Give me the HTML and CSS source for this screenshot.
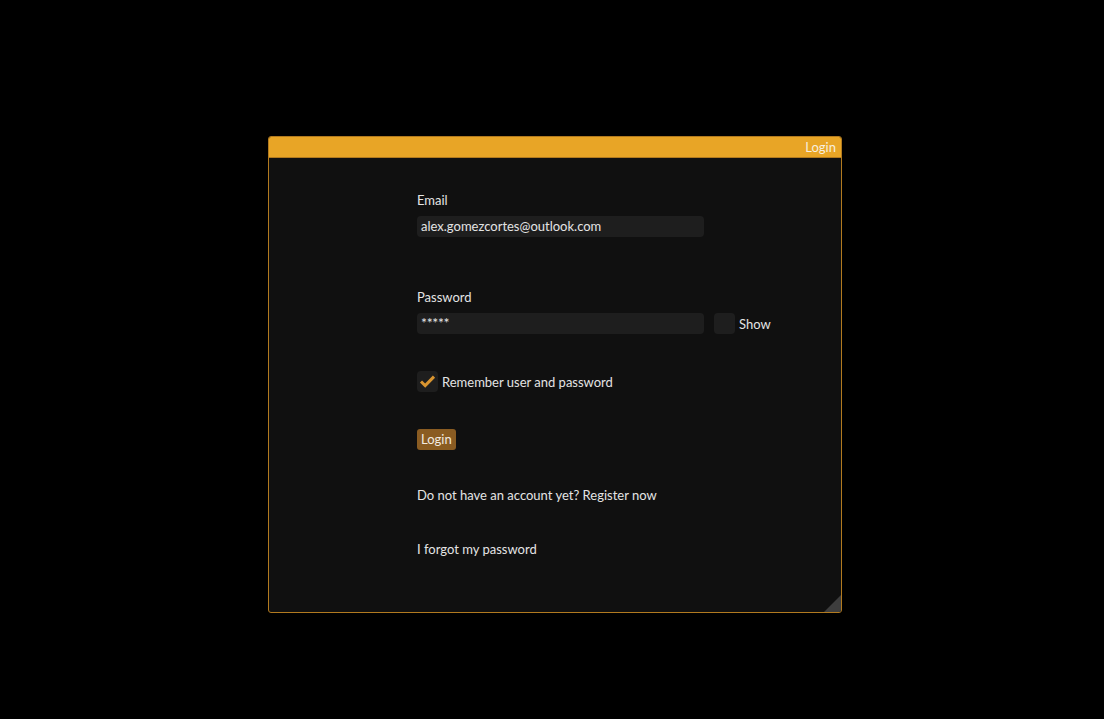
FILE: index.html
```html
<!DOCTYPE html>
<html>
<head>
<meta charset="utf-8">
<link rel="stylesheet" href="styles.css">
</head>
<body>
<div class="window">
  <div class="titlebar"><span class="title">Login</span></div>
  <div class="content">
    <div class="label">Email</div>
    <div class="input-row">
      <div class="input">alex.gomezcortes@outlook.com</div>
    </div>
    <div class="label label-pw">Password</div>
    <div class="input-row">
      <div class="input input-pw">*****</div>
      <div class="checkbox"></div>
      <span class="check-label">Show</span>
    </div>
    <div class="input-row remember">
      <div class="checkbox">
        <svg width="21" height="21" viewBox="0 0 21 21"><path d="M4 10.5 L8.2 14.6 L17 5.6" fill="none" stroke="#d99530" stroke-width="3"/></svg>
      </div>
      <span class="check-label">Remember user and password</span>
    </div>
    <div class="button-row"><button class="btn">Login</button></div>
    <div class="text link1">Do not have an account yet? Register now</div>
    <div class="text link2">I forgot my password</div>
  </div>
  <div class="grip"></div>
</div>
</body>
</html>
```
FILE: styles.css
```css
html, body {
  margin: 0;
  padding: 0;
  background: #000;
  height: 100%;
}
body {
  font-family: Lato, "Noto Sans", sans-serif;
  font-size: 13px;
  color: #e4e4e4;
}
.window {
  position: absolute;
  left: 268px;
  top: 136px;
  width: 572px;
  height: 475px;
  border: 1px solid #b27a1f;
  border-radius: 3px;
  background: #101010;
  overflow: hidden;
}
.titlebar {
  height: 20px;
  background: #e8a526;
  border-bottom: 1px solid #b27a1f;
  display: flex;
  justify-content: flex-end;
  align-items: center;
  padding-right: 5px;
}
.title {
  color: #f7eedf;
  font-size: 13px;
  line-height: 18px;
}
.content {
  padding-left: 148px;
  padding-top: 33px;
  display: flex;
  flex-direction: column;
}
.label {
  line-height: 18px;
  height: 18px;
  margin-bottom: 7px;
}
.label-pw {
  margin-top: 51px;
}
.input-row {
  display: flex;
  align-items: center;
  height: 21px;
}
.input {
  width: 283px;
  height: 21px;
  line-height: 21px;
  padding-left: 4px;
  background: #1e1e1e;
  border-radius: 4px;
  color: #e4e4e4;
}
.input-pw {
  font-size: 14px;
  line-height: 20px;
  letter-spacing: -0.3px;
}
.checkbox {
  width: 21px;
  height: 21px;
  background: #1e1e1e;
  border-radius: 4px;
  margin-left: 10px;
  flex: none;
}
.check-label {
  margin-left: 4px;
  line-height: 18px;
}
.remember {
  margin-top: 37px;
}
.remember .checkbox {
  margin-left: 0;
}
.button-row {
  margin-top: 37px;
  display: flex;
}
.btn {
  height: 21px;
  padding: 0 4px;
  background: #8a5c22;
  color: #f2ebe0;
  border: none;
  border-radius: 3px;
  font-family: inherit;
  font-size: 13px;
  line-height: 21px;
}
.text {
  line-height: 18px;
  height: 18px;
}
.link1 {
  margin-top: 36px;
}
.link2 {
  margin-top: 36px;
}
.grip {
  position: absolute;
  right: 0;
  bottom: 0;
  width: 0;
  height: 0;
  border-left: 17px solid transparent;
  border-bottom: 17px solid #3d3d3d;
}
```
